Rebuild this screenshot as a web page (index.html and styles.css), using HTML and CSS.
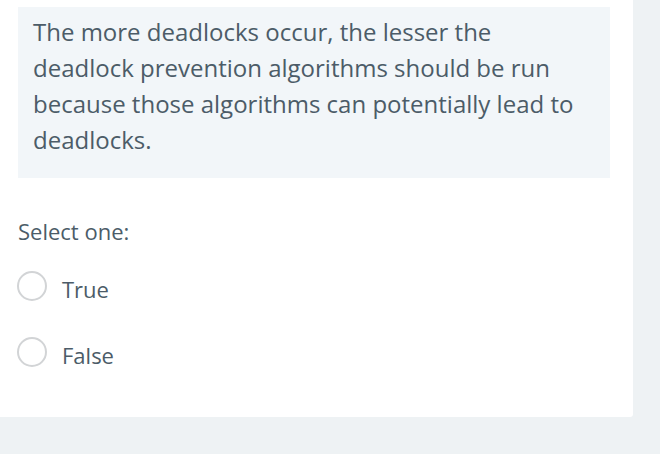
FILE: index.html
```html
<!DOCTYPE html>
<html>
<head>
<meta charset="utf-8">
<link rel="stylesheet" href="styles.css">
</head>
<body>
<div class="page">
  <div class="card">
    <div class="qtext">The more deadlocks occur, the lesser the deadlock prevention algorithms should be run because those algorithms can potentially lead to deadlocks.</div>
    <div class="prompt">Select one:</div>
    <div class="answers">
      <label class="opt"><span class="radio"></span><span class="lbl">True</span></label>
      <label class="opt"><span class="radio"></span><span class="lbl">False</span></label>
    </div>
  </div>
</div>
</body>
</html>
```
FILE: styles.css
```css
html, body {
  margin: 0;
  padding: 0;
  background: #eef2f4;
}
.page {
  width: 660px;
  height: 454px;
  font-family: "Open Sans", "Noto Sans", sans-serif;
  color: #4c5c68;
}
.card {
  width: 633px;
  height: 417px;
  background: #ffffff;
  border-bottom-right-radius: 3px;
  box-sizing: border-box;
  padding: 7px 23px 0 18px;
}
.qtext {
  background: #f2f6f9;
  padding: 7px 30px 20px 15px;
  font-size: 24px;
  line-height: 36px;
  height: 171px;
  box-sizing: border-box;
}
.prompt {
  font-size: 22px;
  line-height: 30px;
  margin-top: 38px;
}
.answers {
  display: flex;
  flex-direction: column;
  gap: 36px;
  margin-top: 25px;
}
.opt {
  display: flex;
  align-items: center;
  height: 30px;
  font-size: 22px;
}
.lbl {
  padding-top: 5px;
}
.radio {
  flex: none;
  display: block;
  box-sizing: border-box;
  width: 30px;
  height: 30px;
  border: 2px solid #d2d4d6;
  border-radius: 50%;
  margin-left: -1px;
  margin-right: 15px;
  background: #fff;
}
```
